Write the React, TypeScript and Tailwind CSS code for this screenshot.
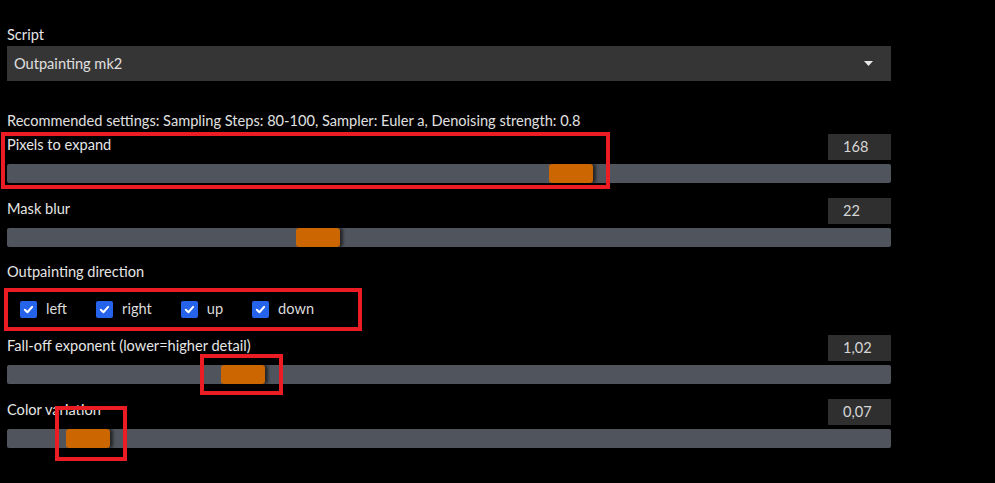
import React from 'react';

const font = { fontFamily: '"Source Sans Pro", Lato, "Noto Sans", sans-serif' };

function SliderRow({ label, value, pos, mt }: { label: string; value: string; pos: number; mt: string }) {
    return (
        <div className={mt}>
            <div className="flex items-start justify-between h-[26px]">
                <span className="text-[14.6px] leading-[20px] pt-[1px] text-[#e6e6e6]">{label}</span>
                <div className="w-[63px] h-[26px] bg-[#2f2f2f] shadow-[2px_2px_3px_rgba(0,0,0,0.6)] text-[14.6px] leading-[26px] pl-[15px] text-[#d6d6d6]">
                    {value}
                </div>
            </div>
            <div className="relative mt-[4px] h-[19px] rounded-[2px] bg-[#50545c]">
                <div
                    className="absolute top-0 h-[19px] w-[44px] rounded-[3px] bg-[#cc6600] shadow-[3px_0_3px_rgba(0,0,0,0.55)]"
                    style={{ left: pos }}
                />
            </div>
        </div>
    );
}

function Check({ label }: { label: string }) {
    return (
        <label className="flex items-center gap-[9px]">
            <span className="flex items-center justify-center w-[17px] h-[17px] rounded-[2px] bg-[#2563eb] shadow-[2px_2px_3px_rgba(0,0,0,0.5)]">
                <svg width="11" height="11" viewBox="0 0 12 12" fill="none">
                    <path d="M2 6.3 L4.8 9 L10 3.2" stroke="white" strokeWidth="2.2" strokeLinecap="round" strokeLinejoin="round" />
                </svg>
            </span>
            <span className="text-[14.6px] leading-[20px] text-[#dcdcdc]">{label}</span>
        </label>
    );
}

export default function App() {
    return (
        <div className="relative w-[995px] h-[483px] bg-black overflow-hidden" style={font}>
            <div className="w-[884px] ml-[7px] pt-[25px]">
                <div className="text-[14.6px] leading-[20px] text-[#e6e6e6]">Script</div>
                <div className="mt-[1px] h-[35px] bg-[#353535] flex items-center justify-between pl-[7px] pr-[18px]">
                    <span className="text-[14.6px] text-[#e0e0e0]">Outpainting mk2</span>
                    <svg width="9" height="5" viewBox="0 0 9 5">
                        <path d="M0 0 H9 L4.5 5 Z" fill="#e8e8e8" />
                    </svg>
                </div>
                <div className="mt-[30px] text-[14.6px] leading-[20px] text-[#e0e0e0]">
                    Recommended settings: Sampling Steps: 80-100, Sampler: Euler a, Denoising strength: 0.8
                </div>
                <SliderRow label="Pixels to expand" value="168" pos={542} mt="mt-[3px]" />
                <SliderRow label="Mask blur" value="22" pos={289} mt="mt-[15px]" />
                <div className="mt-[15px] text-[14.6px] leading-[20px] text-[#e6e6e6]">Outpainting direction</div>
                <div className="mt-[17px] h-[20px] flex items-center pl-[13px] gap-[29px]">
                    <Check label="left" />
                    <Check label="right" />
                    <Check label="up" />
                    <Check label="down" />
                </div>
                <SliderRow label="Fall-off exponent (lower=higher detail)" value="1,02" pos={214} mt="mt-[16px]" />
                <SliderRow label="Color variation" value="0,07" pos={59} mt="mt-[15px]" />
            </div>

            <div className="absolute left-[1px] top-[132px] w-[609px] h-[57px] border-4 border-[#ec1c24]" />
            <div className="absolute left-[4px] top-[288px] w-[358px] h-[43px] border-4 border-[#ec1c24]" />
            <div className="absolute left-[200px] top-[354px] w-[83px] h-[41px] border-4 border-[#ec1c24]" />
            <div className="absolute left-[55px] top-[406px] w-[72px] h-[55px] border-4 border-[#ec1c24]" />
        </div>
    );
}
